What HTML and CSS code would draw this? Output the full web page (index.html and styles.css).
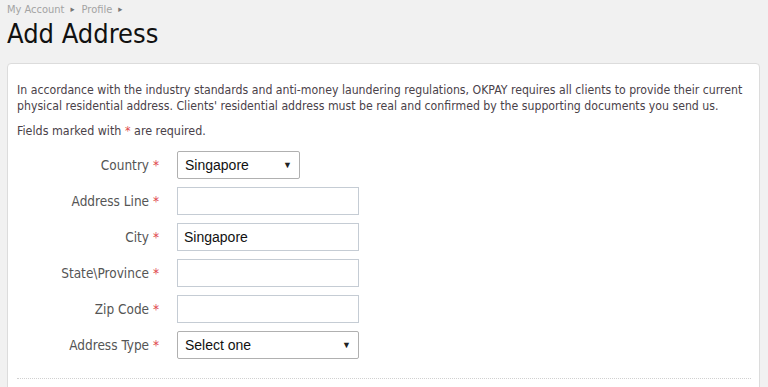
FILE: index.html
```html
<!DOCTYPE html>
<html>
<head>
<meta charset="utf-8">
<link rel="stylesheet" href="styles.css">
</head>
<body>
<div class="crumbs">
  <a class="crumb">My Account</a><span class="sep">&#9656;</span>
  <a class="crumb">Profile</a><span class="sep">&#9656;</span>
</div>
<h1 class="title">Add Address</h1>
<div class="card">
  <p class="intro">In accordance with the industry standards and anti-money laundering regulations, OKPAY requires all clients to provide their current physical residential address. Clients' residential address must be real and confirmed by the supporting documents you send us.</p>
  <p class="note">Fields marked with <span class="req">*</span> are required.</p>
  <div class="form">
    <div class="row">
      <label class="label">Country <span class="req">*</span></label>
      <div class="select short"><span>Singapore</span><span class="caret">&#9660;</span></div>
    </div>
    <div class="row">
      <label class="label">Address Line <span class="req">*</span></label>
      <input class="input" type="text" value="">
    </div>
    <div class="row">
      <label class="label">City <span class="req">*</span></label>
      <input class="input" type="text" value="Singapore">
    </div>
    <div class="row">
      <label class="label">State\Province <span class="req">*</span></label>
      <input class="input" type="text" value="">
    </div>
    <div class="row">
      <label class="label">Zip Code <span class="req">*</span></label>
      <input class="input" type="text" value="">
    </div>
    <div class="row">
      <label class="label">Address Type <span class="req">*</span></label>
      <div class="select long"><span>Select one</span><span class="caret">&#9660;</span></div>
    </div>
  </div>
  <div class="divider"></div>
</div>
</body>
</html>
```
FILE: styles.css
```css
html, body {
  margin: 0;
  padding: 0;
  background: #f1f1f1;
  font-family: "DejaVu Sans Condensed", "DejaVu Sans", sans-serif;
  overflow: hidden;
}
.crumbs {
  padding: 2px 0 0 7px;
  height: 15px;
  font-size: 11px;
  line-height: 15px;
  color: #a3a3a3;
  display: flex;
  align-items: center;
}
.crumb { color: #a3a3a3; }
.sep {
  font-size: 9px;
  color: #777;
  margin: 0 7px 0 6px;
}
.title {
  margin: 0 0 0 7px;
  font-size: 27px;
  font-weight: normal;
  color: #111;
  line-height: 34px;
  height: 46px;
}
.card {
  margin-left: 7px;
  background: #fff;
  border: 1px solid #dcdcdc;
  border-radius: 4px;
  padding: 18px 8px 0 9px;
  box-sizing: border-box;
  width: 753px;
  height: 340px;
}
.intro {
  margin: 0;
  font-size: 12.2px;
  line-height: 16px;
  color: #4a4249;
}
.note {
  margin: 9px 0 0;
  font-size: 12.4px;
  line-height: 16px;
  color: #4a4249;
}
.req { color: #e0474c; }
.form {
  margin-top: 12px;
  display: flex;
  flex-direction: column;
  gap: 8px;
}
.row {
  display: flex;
  align-items: center;
  height: 28px;
}
.label {
  width: 149px;
  text-align: right;
  font-size: 13.5px;
  color: #555;
  margin-right: 18px;
  margin-left: -7px;
}
.input {
  box-sizing: border-box;
  width: 182px;
  height: 28px;
  border: 1px solid #c5ccd4;
  border-radius: 0;
  padding: 0 6px;
  font-family: "Liberation Sans", Arial, sans-serif;
  font-size: 14px;
  color: #111;
  margin: 0;
  outline: none;
}
.select {
  box-sizing: border-box;
  height: 28px;
  border: 1px solid #b0b0b0;
  border-radius: 2px;
  display: flex;
  align-items: center;
  justify-content: space-between;
  padding: 0 7px 0 7px;
  font-family: "Liberation Sans", Arial, sans-serif;
  font-size: 14px;
  color: #111;
  background: #fff;
}
.select.short { width: 123px; }
.select.long { width: 182px; }
.caret { font-size: 9px; color: #222; }
.divider {
  margin-top: 19px;
  border-top: 1px dotted #d0d0d0;
}
```
